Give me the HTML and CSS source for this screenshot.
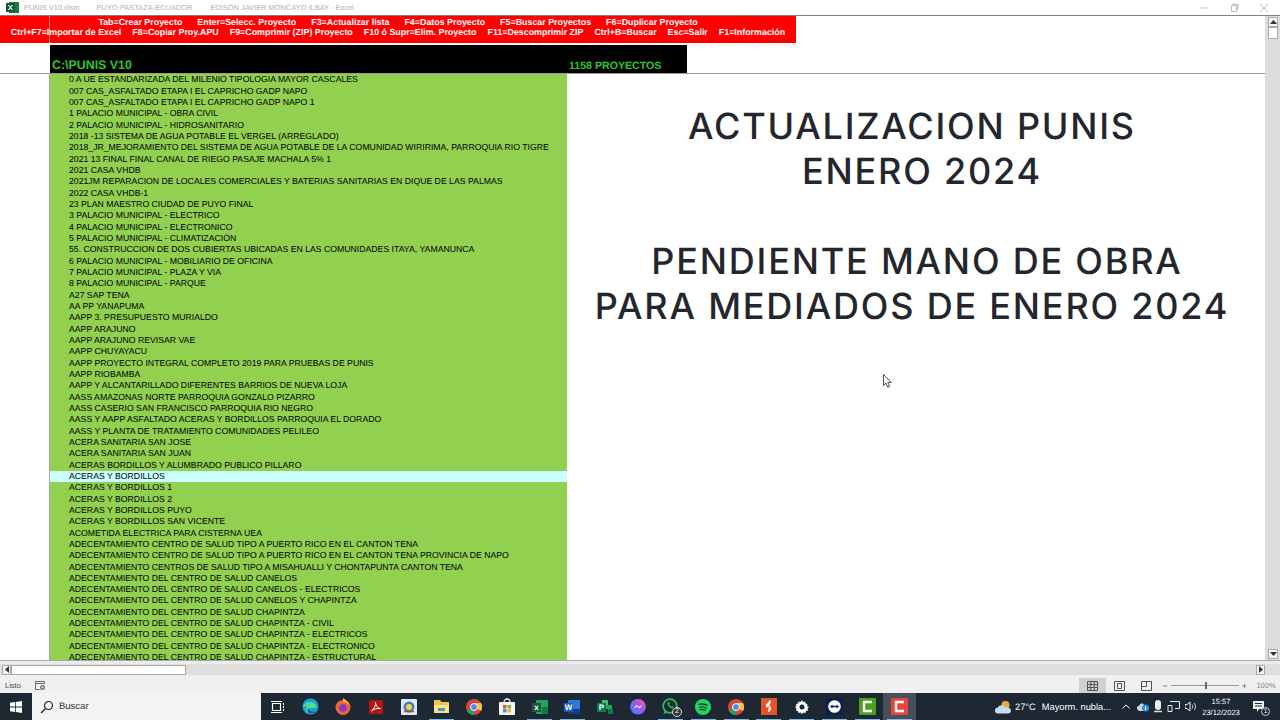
FILE: index.html
```html
<!DOCTYPE html>
<html lang="es">
<head>
  <meta charset="UTF-8">
  <title>PUNIS V10</title>
  <link rel="stylesheet" href="styles.css">
</head>
<body>

  <!-- Excel title bar -->
  <div class="titlebar">
    <svg class="xl-logo" width="13" height="13" viewBox="0 0 13 13">
      <rect x="3" y="1" width="10" height="11" fill="#1f7a45"/>
      <rect x="0" y="2" width="9" height="9" fill="#0f5c30"/>
      <path d="M2.5 4l4 5M6.5 4l-4 5" stroke="#fff" stroke-width="1.2"/>
    </svg>
    <span class="title-file">PUNIS V10.xlsm</span>
    <span class="title-place">PUYO-PASTAZA-ECUADOR</span>
    <span class="title-name">EDISON JAVIER MONCAYO ILBAY - Excel</span>
    <div class="win-btns">
      <svg width="10" height="10" viewBox="0 0 10 10"><path d="M1 5h8" stroke="#c4c4c4"/></svg>
      <svg width="10" height="10" viewBox="0 0 10 10"><path d="M2.500 2.500h5v6h-5zM4 2.500V1h5v5H7.500" fill="none" stroke="#bdbdbd"/></svg>
      <svg width="10" height="10" viewBox="0 0 10 10"><path d="M1 1l8 8M9 1l-8 8" stroke="#bdbdbd"/></svg>
    </div>
  </div>

  <!-- Worksheet -->
  <div class="sheet">
    <div class="sheet-main">
      <div class="keys">
        <div class="keys-line">
          <span>Tab=Crear Proyecto</span>
          <span>Enter=Selecc. Proyecto</span>
          <span>F3=Actualizar lista</span>
          <span>F4=Datos Proyecto</span>
          <span>F5=Buscar Proyectos</span>
          <span>F6=Duplicar Proyecto</span>
        </div>
        <div class="keys-line keys-tight">
          <span>Ctrl+F7=Importar de Excel</span>
          <span>F8=Copiar Proy.APU</span>
          <span>F9=Comprimir (ZIP) Proyecto</span>
          <span>F10 ó Supr=Elim. Proyecto</span>
          <span>F11=Descomprimir ZIP</span>
          <span>Ctrl+B=Buscar</span>
          <span>Esc=Salir</span>
          <span>F1=Información</span>
        </div>
      </div>

      <div class="path-row">
        <div class="path-bar">
          <div class="path-name">C:\PUNIS V10</div>
          <div class="path-count">1158 PROYECTOS</div>
        </div>
      </div>

      <div class="body-row">
        <div class="gutter"></div>
        <ul class="projects">
          <li>0 A UE ESTANDARIZADA DEL MILENIO TIPOLOGIA MAYOR CASCALES</li>
          <li>007 CAS_ASFALTADO ETAPA I EL CAPRICHO GADP NAPO</li>
          <li>007 CAS_ASFALTADO ETAPA I EL CAPRICHO GADP NAPO 1</li>
          <li>1 PALACIO MUNICIPAL - OBRA CIVIL</li>
          <li>2 PALACIO MUNICIPAL - HIDROSANITARIO</li>
          <li>2018 -13 SISTEMA DE AGUA POTABLE EL VERGEL (ARREGLADO)</li>
          <li>2018_JR_MEJORAMIENTO DEL SISTEMA DE AGUA POTABLE DE LA COMUNIDAD WIRIRIMA, PARROQUIA RIO TIGRE</li>
          <li>2021 13 FINAL FINAL CANAL DE RIEGO PASAJE MACHALA 5% 1</li>
          <li>2021 CASA VHDB</li>
          <li>2021JM REPARACION DE LOCALES COMERCIALES Y BATERIAS SANITARIAS EN DIQUE DE LAS PALMAS</li>
          <li>2022 CASA VHDB-1</li>
          <li>23 PLAN MAESTRO CIUDAD DE PUYO FINAL</li>
          <li>3 PALACIO MUNICIPAL - ELECTRICO</li>
          <li>4 PALACIO MUNICIPAL - ELECTRONICO</li>
          <li>5 PALACIO MUNICIPAL - CLIMATIZACIÓN</li>
          <li>55. CONSTRUCCION DE DOS CUBIERTAS UBICADAS EN LAS COMUNIDADES ITAYA, YAMANUNCA</li>
          <li>6 PALACIO MUNICIPAL - MOBILIARIO DE OFICINA</li>
          <li>7 PALACIO MUNICIPAL - PLAZA Y VIA</li>
          <li>8 PALACIO MUNICIPAL - PARQUE</li>
          <li>A27 SAP TENA</li>
          <li>AA PP YANAPUMA</li>
          <li>AAPP 3. PRESUPUESTO MURIALDO</li>
          <li>AAPP ARAJUNO</li>
          <li>AAPP ARAJUNO REVISAR VAE</li>
          <li>AAPP CHUYAYACU</li>
          <li>AAPP PROYECTO INTEGRAL COMPLETO 2019 PARA PRUEBAS DE PUNIS</li>
          <li>AAPP RIOBAMBA</li>
          <li>AAPP Y ALCANTARILLADO DIFERENTES BARRIOS DE NUEVA LOJA</li>
          <li>AASS AMAZONAS NORTE PARROQUIA GONZALO PIZARRO</li>
          <li>AASS CASERIO SAN FRANCISCO PARROQUIA RIO NEGRO</li>
          <li>AASS Y AAPP ASFALTADO ACERAS Y BORDILLOS PARROQUIA EL DORADO</li>
          <li>AASS Y PLANTA DE TRATAMIENTO COMUNIDADES PELILEO</li>
          <li>ACERA SANITARIA SAN JOSE</li>
          <li>ACERA SANITARIA SAN JUAN</li>
          <li>ACERAS BORDILLOS Y ALUMBRADO PUBLICO PILLARO</li>
          <li class="selected">ACERAS Y BORDILLOS</li>
          <li>ACERAS Y BORDILLOS 1</li>
          <li>ACERAS Y BORDILLOS 2</li>
          <li>ACERAS Y BORDILLOS PUYO</li>
          <li>ACERAS Y BORDILLOS SAN VICENTE</li>
          <li>ACOMETIDA ELECTRICA PARA CISTERNA UEA</li>
          <li>ADECENTAMIENTO CENTRO DE SALUD TIPO A PUERTO RICO EN EL CANTON TENA</li>
          <li>ADECENTAMIENTO CENTRO DE SALUD TIPO A PUERTO RICO EN EL CANTON TENA PROVINCIA DE NAPO</li>
          <li>ADECENTAMIENTO CENTROS DE SALUD TIPO A MISAHUALLI Y CHONTAPUNTA CANTON TENA</li>
          <li>ADECENTAMIENTO DEL CENTRO DE SALUD CANELOS</li>
          <li>ADECENTAMIENTO DEL CENTRO DE SALUD CANELOS - ELECTRICOS</li>
          <li>ADECENTAMIENTO DEL CENTRO DE SALUD CANELOS Y CHAPINTZA</li>
          <li>ADECENTAMIENTO DEL CENTRO DE SALUD CHAPINTZA</li>
          <li>ADECENTAMIENTO DEL CENTRO DE SALUD CHAPINTZA - CIVIL</li>
          <li>ADECENTAMIENTO DEL CENTRO DE SALUD CHAPINTZA - ELECTRICOS</li>
          <li>ADECENTAMIENTO DEL CENTRO DE SALUD CHAPINTZA - ELECTRONICO</li>
          <li>ADECENTAMIENTO DEL CENTRO DE SALUD CHAPINTZA - ESTRUCTURAL</li>
        </ul>
        <div class="note">
          <div class="note-line">ACTUALIZACION PUNIS</div>
          <div class="note-line shift-a">ENERO 2024</div>
          <div class="note-line blank">&nbsp;</div>
          <div class="note-line shift-b">PENDIENTE MANO DE OBRA</div>
          <div class="note-line">PARA MEDIADOS DE ENERO 2024</div>
        </div>
      </div>
    </div>

    <!-- Vertical scrollbar -->
    <div class="vscroll">
      <div class="vbtn"><svg width="7" height="4" viewBox="0 0 7 4"><path d="M3.500 0L7 4H0z" fill="#333"/></svg></div>
      <div class="vthumb"></div>
      <div class="vtrack"></div>
      <div class="vbtn"><svg width="7" height="4" viewBox="0 0 7 4"><path d="M0 0h7L3.500 4z" fill="#333"/></svg></div>
    </div>
  </div>

  <!-- Horizontal scrollbar -->
  <div class="hscroll">
    <div class="hbtn"><svg width="4" height="7" viewBox="0 0 4 7"><path d="M4 0v7L0 3.500z" fill="#333"/></svg></div>
    <div class="hthumb"></div>
    <div class="htrack"></div>
    <div class="hbtn"><svg width="4" height="7" viewBox="0 0 4 7"><path d="M0 0v7l4-3.500z" fill="#333"/></svg></div>
  </div>

  <!-- Excel status bar -->
  <div class="statusbar">
    <span class="status-text">Listo</span>
    <svg class="macro-icon" width="11" height="10" viewBox="0 0 11 10">
      <path d="M.5.500h9v2h-9zM.5 2.500v6h4" fill="none" stroke="#666"/>
      <circle cx="7.500" cy="6.500" r="2.500" fill="#777"/>
      <circle cx="7.500" cy="6.500" r="1" fill="#eee"/>
    </svg>
    <div class="views">
      <div class="view active">
        <svg width="11" height="10" viewBox="0 0 11 10"><path d="M.5.500h10v9H.5zM3.800.500v9M7.200.500v9M.5 3.500h10M.5 6.500h10" fill="none" stroke="#555"/></svg>
      </div>
      <div class="view">
        <svg width="11" height="10" viewBox="0 0 11 10"><path d="M.5.500h10v9H.5z" fill="none" stroke="#555"/><path d="M3.500 2.500h4v5h-4z" fill="none" stroke="#555"/></svg>
      </div>
      <div class="view">
        <svg width="11" height="10" viewBox="0 0 11 10"><path d="M.5.500h10v9H.5zM5.500.500v5H.5" fill="none" stroke="#555"/></svg>
      </div>
    </div>
    <div class="zoombar">
      <span class="zoom-sign">−</span>
      <div class="zoom-track"><div class="zoom-knob"></div></div>
      <span class="zoom-sign">+</span>
    </div>
    <span class="zoom-pct">100%</span>
  </div>

  <!-- Windows taskbar -->
  <div class="taskbar">
    <div class="start">
      <svg width="12" height="12" viewBox="0 0 12 12"><path d="M0 1.700L5 1v4.600H0zM5.800.900L12 0v5.600H5.800zM0 6.400h5V11l-5-.7zM5.800 6.400H12V12l-6.200-.9z" fill="#fff"/></svg>
    </div>
    <div class="searchbox">
      <svg width="14" height="14" viewBox="0 0 14 14"><circle cx="8.500" cy="5.500" r="4" fill="none" stroke="#222" stroke-width="1.200"/><path d="M5.500 8.500L1 13" stroke="#222" stroke-width="1.300"/></svg>
      <span>Buscar</span>
    </div>
    <div class="apps">
      <div class="app">
        <svg width="14" height="12" viewBox="0 0 14 12"><path d="M1.500 2.500h8v7h-8z" fill="none" stroke="#fff" stroke-width="1.200"/><path d="M0 .5h11M0 11.500h11M12.500 2v2M12.500 5v2M12.500 8v2" stroke="#fff"/></svg>
      </div>
      <div class="app">
        <svg width="17" height="17" viewBox="0 0 17 17"><circle cx="8.500" cy="8.500" r="8" fill="#1b9de2"/><path d="M1 9c1-5 10-7 13-2 1 2 0 3-2 3H8c0 3 4 4 7 3-2 3-6 4-9 2-3-2-2-6 0-7-2 0-4 1-5 1z" fill="#4fdc8b"/><path d="M7 10c0 3 4 4 8 3-2 3-6 3-8 2-2-1-2-4 0-5z" fill="#0d5fb0"/></svg>
      </div>
      <div class="app">
        <svg width="16" height="17" viewBox="0 0 16 17"><circle cx="8" cy="9.500" r="7.500" fill="#f2603a"/><path d="M8 0c3 2 6 4 7 8-2-3-4-4-7-4z" fill="#ffb52e"/><circle cx="8" cy="10" r="3.800" fill="#7a3ec8"/></svg>
      </div>
      <div class="app">
        <svg width="14" height="14" viewBox="0 0 14 14"><rect width="14" height="14" rx="1.500" fill="#b3160f"/><path d="M2.500 11C5 9 7 5 6.500 2.500 7 6 9 8.500 11.500 8.500 8 8 5 9 2.500 11z" fill="none" stroke="#fff" stroke-width="1"/></svg>
      </div>
      <div class="app">
        <svg width="16" height="16" viewBox="0 0 16 16"><rect width="16" height="16" rx="1" fill="#dfe8f2"/><circle cx="8" cy="8" r="5.500" fill="#3f7fc4"/><circle cx="8" cy="8" r="3" fill="#f3d34a"/><path d="M3 12.500h10" stroke="#b44" stroke-width="1.500"/></svg>
      </div>
      <div class="app running">
        <svg width="15" height="13" viewBox="0 0 15 13"><path d="M0 0h6l1.500 2H15v11H0z" fill="#f1c552"/><rect y="5" width="15" height="8" fill="#ffdf85"/><rect x="4" y="8" width="7" height="3" fill="#3d9ad6"/></svg>
      </div>
      <div class="app">
        <svg width="16" height="16" viewBox="0 0 16 16"><circle cx="8" cy="8" r="8" fill="#dd4437"/><path d="M8 8L1 12a8 8 0 0 0 7 4z" fill="#1da462"/><path d="M8 8l7 4a8 8 0 0 0 0-8H8z" fill="#fbc02d"/><circle cx="8" cy="8" r="3.500" fill="#4a8af4" stroke="#fff"/></svg>
      </div>
      <div class="app">
        <svg width="16" height="17" viewBox="0 0 16 17"><rect y="4" width="16" height="13" rx="1" fill="#f5f5f5"/><path d="M5 4a3 3 0 0 1 6 0" fill="none" stroke="#eee" stroke-width="1.300"/><rect x="4" y="7" width="3.500" height="3.500" fill="#e8562c"/><rect x="8.500" y="7" width="3.500" height="3.500" fill="#7db93a"/><rect x="4" y="11" width="3.500" height="3.500" fill="#2f9ee5"/><rect x="8.500" y="11" width="3.500" height="3.500" fill="#f7b92f"/></svg>
      </div>
      <div class="app running">
        <svg width="16" height="14" viewBox="0 0 16 14"><rect x="4" width="12" height="14" rx="1" fill="#21a366"/><rect x="10" y="7" width="6" height="7" fill="#107c41"/><rect y="3" width="9" height="9" fill="#185c37"/><text x="4.500" y="10.200" class="badge-letter">x</text></svg>
      </div>
      <div class="app running">
        <svg width="16" height="14" viewBox="0 0 16 14"><rect x="4" width="12" height="14" rx="1" fill="#2b7cd3"/><rect x="4" y="9" width="12" height="5" fill="#103f91"/><rect y="3" width="9" height="9" fill="#185abd"/><text x="4.500" y="10.200" class="badge-letter">W</text></svg>
      </div>
      <div class="app">
        <svg width="16" height="14" viewBox="0 0 16 14"><rect x="5" width="6" height="5" fill="#33c481"/><rect x="8" y="5" width="7" height="4" fill="#21a366"/><rect x="11" y="9" width="5" height="5" fill="#107c41"/><rect y="3" width="9" height="9" fill="#0e7a4e"/><text x="4.500" y="10.200" class="badge-letter">P</text></svg>
      </div>
      <div class="app">
        <svg width="16" height="16" viewBox="0 0 16 16"><defs><linearGradient id="msg" x1="0" y1="1" x2="1" y2="0"><stop offset="0" stop-color="#2f8cff"/><stop offset=".6" stop-color="#a552f0"/><stop offset="1" stop-color="#ff6f7d"/></linearGradient></defs><circle cx="8" cy="7.800" r="7.800" fill="url(#msg)"/><path d="M3.500 10l3-4 2.500 2 3.500-2.500-3 4-2.500-2z" fill="#fff"/></svg>
      </div>
      <div class="app running">
        <svg width="18" height="18" viewBox="0 0 18 18"><circle cx="8" cy="8" r="6.800" fill="none" stroke="#25c05f" stroke-width="1.700"/><path d="M1.500 16l1.200-4 2.800 2.600z" fill="#25c05f"/><path d="M5.500 5c0 3 2.500 5.500 5.500 5.500l.7-1.700-1.800-.8-.7.700C8.500 8.300 7.500 7.300 7.200 6.300l.7-.7L7 4z" fill="#25c05f"/></svg>
        <span class="wa-count">2</span>
      </div>
      <div class="app running">
        <svg width="16" height="16" viewBox="0 0 16 16"><circle cx="8" cy="8" r="8" fill="#1ed760"/><path d="M3.500 5.500c3-1 6.500-.6 9 1M4 8.200c2.500-.8 5.500-.4 7.700 1M4.500 10.800c2-.6 4.300-.3 6.200.8" fill="none" stroke="#123" stroke-width="1.200"/></svg>
      </div>
      <div class="app running">
        <svg width="16" height="16" viewBox="0 0 16 16"><circle cx="8" cy="8" r="8" fill="#dd4437"/><path d="M8 8L1 12a8 8 0 0 0 7 4z" fill="#1da462"/><path d="M8 8l7 4a8 8 0 0 0 0-8H8z" fill="#fbc02d"/><circle cx="8" cy="8" r="3.500" fill="#4a8af4" stroke="#fff"/></svg>
      </div>
      <div class="app running">
        <svg width="16" height="17" viewBox="0 0 16 17"><rect width="16" height="17" fill="#e2542a"/><path d="M9 2c-1 2-4 3-4 6 0 1 1 2 2 1l1-1-1 6c2 0 3-2 3-4 0-1-1-2-2-1l1-3c1-1 1-3 0-4z" fill="#fff"/></svg>
      </div>
      <div class="app running">
        <svg width="14" height="14" viewBox="0 0 14 14"><path d="M7 0l1 2 2-.5.500 2 2 .5-.5 2 2 1-1.500 1.500.5 2-2 .5-.5 2-2-.5-1.500 1.500-1.500-1.500-2 .5-.5-2-2-.5.500-2L0 7l1.500-1-.5-2 2-.5.500-2 2 .5z" fill="#fff"/><circle cx="7" cy="7" r="2.500" fill="#1d2833"/></svg>
      </div>
      <div class="app running">
        <svg width="17" height="17" viewBox="0 0 17 17"><rect width="17" height="17" rx="2" fill="#0c1e5a"/><circle cx="8.500" cy="8.500" r="6.300" fill="#fff"/><path d="M4 8.500l2.500-2v1.300h4V6.500l2.500 2-2.500 2V9.200h-4v1.300z" fill="#0c1e5a"/></svg>
      </div>
      <div class="app running">
        <svg width="17" height="17" viewBox="0 0 17 17"><rect width="17" height="17" rx="1" fill="#4aa01c"/><path d="M13 4H5v9h8" fill="none" stroke="#fff" stroke-width="2.400"/></svg>
      </div>
      <div class="app running current">
        <svg width="17" height="17" viewBox="0 0 17 17"><rect width="17" height="17" rx="1" fill="#e8443a"/><path d="M13 4H5v9h8" fill="none" stroke="#fff" stroke-width="2.400"/></svg>
      </div>
    </div>

    <div class="tray">
      <svg class="tray-cloud" width="17" height="14" viewBox="0 0 17 14"><circle cx="10.500" cy="5" r="4" fill="#f2a93b"/><path d="M3 13.500a3 3 0 0 1 0-6c1-3 6-3 7 0 3-1 6 1 6 3s-1 3-3 3z" fill="#c6dcf2"/></svg>
      <span class="tray-temp">27°C</span>
      <span class="tray-weather">Mayorm. nubla...</span>
      <svg class="tray-caret" width="8" height="5" viewBox="0 0 8 5"><path d="M.5 4.500L4 1l3.500 3.500" fill="none" stroke="#fff"/></svg>
      <svg class="tray-icon" width="12" height="10" viewBox="0 0 12 10"><path d="M0 7a2 2 0 0 1 2-3c1-3 4-3 5-1v6H2z" fill="#c8d4de"/><circle cx="8.500" cy="6" r="3.500" fill="#2b8fe0"/><path d="M8.500 4.500v3.500" stroke="#fff"/></svg>
      <svg class="tray-icon" width="8" height="13" viewBox="0 0 8 13"><rect x="1" width="6" height="10" rx="3" fill="#eee"/><path d="M0 11.500h8" stroke="#ddd" stroke-width="1.500"/></svg>
      <svg class="tray-icon" width="13" height="11" viewBox="0 0 13 11"><path d="M3 .5h9.500v7H8M5 10.500H1v-6h4zM3 8.500h0" fill="none" stroke="#eee"/></svg>
      <svg class="tray-icon" width="12" height="11" viewBox="0 0 12 11"><path d="M0 3.500h2L5 1v9L2 7.500H0z" fill="none" stroke="#eee"/><path d="M7 3.500c1 1 1 3 0 4M9 2c2 2 2 5 0 7" fill="none" stroke="#eee"/></svg>
      <div class="clock">
        <div>15:57</div>
        <div>23/12/2023</div>
      </div>
      <div class="notif">
        <svg width="12" height="11" viewBox="0 0 12 11"><path d="M0 0h11v8H6l-2 3V8H0z" fill="#eee"/><path d="M2 2.500h7M2 5h7" stroke="#1d2833"/></svg>
        <span class="notif-count">1</span>
      </div>
    </div>
  </div>

  <!-- Mouse pointer -->
  <svg class="pointer" width="9" height="14" viewBox="0 0 9 14">
    <path d="M.5.500v11l2.500-2.400 1.800 4.200 1.800-.8L4.800 8.400h3.500z" fill="#fff" stroke="#222" stroke-width=".8"/>
  </svg>

</body>
</html>
```

FILE: styles.css
```css
/* Basic page styles */
html, body {
  margin: 0;
  padding: 0;
  height: 100%;
  overflow: hidden;
  background-color: #fff;
  font-family: "Liberation Sans", Arial, sans-serif;
  text-rendering: geometricPrecision;
}

body {
  display: flex;
  flex-direction: column;
  height: 720px;
}

/* Title bar */
.titlebar {
  display: flex;
  align-items: center;
  height: 15px;
  flex: none;
  color: #b0b0b0;
  font-size: 7.450px;
  background-color: #fff;
  border-bottom: 1px solid #808080;
  box-sizing: content-box;
}

.xl-logo {
  margin-left: 6px;
}

.title-file {
  margin-left: 5px;
}

.title-place {
  margin-left: 17px;
}

.title-name {
  margin-left: 18px;
}

.win-btns {
  display: flex;
  gap: 20px;
  margin-left: auto;
  margin-right: 11px;
}

/* Worksheet */
.sheet {
  display: flex;
  flex: 1;
  min-height: 0;
  border-bottom: 1px solid #a8a8a8;
}

.sheet-main {
  flex: 1;
  min-width: 0;
  display: flex;
  flex-direction: column;
  position: relative;
}

.keys {
  width: 796px;
  height: 27px;
  flex: none;
  background-color: #ff0000;
  color: #fff;
  font-size: 8.900px;
  font-weight: bold;
  line-height: 10px;
  padding-top: 1px;
  box-sizing: border-box;
  background-image: linear-gradient(#ff8080, #ff8080);
  background-size: 1px 100%;
  background-position: 49px 0;
  background-repeat: no-repeat;
}

.keys-line {
  display: flex;
  justify-content: center;
  gap: 15px;
  white-space: nowrap;
}

.keys-tight {
  gap: 11px;
}

.path-row {
  height: 31px;
  flex: none;
  padding-top: 2px;
  box-sizing: border-box;
  padding-left: 50px;
  border-bottom: 1px solid #9a9a9a;
}

.path-bar {
  display: flex;
  width: 637px;
  height: 28px;
  background-color: #000;
  color: #2fc42f;
  font-weight: bold;
  align-items: flex-end;
  padding-bottom: 1px;
  box-sizing: border-box;
}

.path-name {
  width: 517px;
  padding-left: 2px;
  box-sizing: border-box;
  font-size: 12.400px;
}

.path-count {
  padding-left: 2px;
  font-size: 10.600px;
}

.body-row {
  display: flex;
  flex: 1;
  min-height: 0;
}

.gutter {
  width: 49px;
  flex: none;
  border-right: 1px solid #a8a8a8;
}

.projects {
  list-style: none;
  width: 517px;
  flex: none;
  margin: 0;
  padding: .400px 0 0;
  box-sizing: border-box;
  overflow: hidden;
  background-color: #92d050;
  color: #000;
  font-size: 8.700px;
}

.projects li {
  height: 11.340px;
  line-height: 11.340px;
  padding-left: 19px;
  white-space: nowrap;
  overflow: hidden;
}

.projects .selected {
  background-color: #ccffff;
}

/* Note beside the list */
.note {
  flex: 1;
  padding-top: 30px;
  color: #23262d;
  font-family: Inter, sans-serif;
  font-weight: 500;
  font-size: 36px;
  line-height: 45px;
  letter-spacing: 1.800px;
}

.note-line {
  text-align: center;
  white-space: nowrap;
  padding-right: 8px;
}

.shift-a {
  padding-right: 0;
  padding-left: 12px;
}

.shift-b {
  padding-right: 0;
  padding-left: 2px;
}

/* Scrollbars */
.vscroll {
  width: 15px;
  flex: none;
  display: flex;
  flex-direction: column;
  align-items: center;
  background-color: #dcdcdc;
  padding: 1px 0 1px 1px;
  box-sizing: border-box;
}

.vbtn {
  width: 10px;
  height: 10px;
  flex: none;
  display: flex;
  align-items: center;
  justify-content: center;
  background-color: #f4f4f4;
  border: 1px solid #aaa;
  box-sizing: border-box;
}

.vthumb {
  width: 10px;
  height: 12px;
  flex: none;
  background-color: #fff;
  border: 1px solid #aaa;
  box-sizing: border-box;
}

.vtrack {
  flex: 1;
}

.hscroll {
  height: 16px;
  flex: none;
  display: flex;
  align-items: center;
  background-color: #dedede;
  border-top: 3px solid #ececec;
  border-bottom: 2px solid #f0f0f0;
  box-sizing: border-box;
  padding: 0 15px 0 2px;
}

.hbtn {
  width: 9px;
  height: 10px;
  flex: none;
  display: flex;
  align-items: center;
  justify-content: center;
  background-color: #f4f4f4;
  border: 1px solid #aaa;
  box-sizing: border-box;
}

.hthumb {
  width: 175px;
  height: 10px;
  flex: none;
  background-color: #fff;
  border: 1px solid #aaa;
  box-sizing: border-box;
}

.htrack {
  flex: 1;
}

/* Status bar */
.statusbar {
  display: flex;
  align-items: center;
  height: 16px;
  flex: none;
  padding-top: 1px;
  box-sizing: border-box;
  background-color: #f0f0f0;
  color: #444;
  font-size: 7.500px;
}

.status-text {
  margin-left: 5px;
}

.macro-icon {
  margin-left: 14px;
}

.views {
  display: flex;
  margin-left: auto;
}

.view {
  width: 27px;
  height: 15px;
  display: flex;
  align-items: center;
  justify-content: center;
}

.view.active {
  background-color: #d0d0d0;
}

.zoombar {
  display: flex;
  align-items: center;
  gap: 3px;
  margin-left: 2px;
  margin-right: 5px;
}

.zoom-sign {
  font-size: 9px;
  color: #555;
}

.zoom-track {
  position: relative;
  width: 68px;
  height: 1px;
  background-color: #999;
}

.zoom-knob {
  position: absolute;
  left: 34px;
  top: -3px;
  width: 2px;
  height: 7px;
  background-color: #666;
}

.zoom-pct {
  width: 28px;
  text-align: center;
  color: #888;
}

/* Taskbar */
.taskbar {
  display: flex;
  align-items: center;
  height: 27px;
  flex: none;
  background-color: #1d2833;
  color: #fff;
}

.start {
  width: 32px;
  display: flex;
  justify-content: center;
}

.searchbox {
  display: flex;
  align-items: center;
  width: 229px;
  height: 27px;
  background-color: #f3f3f3;
  color: #333;
  font-size: 9.500px;
  box-sizing: border-box;
  padding-left: 8px;
  gap: 5px;
}

.apps {
  display: flex;
  height: 27px;
}

.app {
  position: relative;
  width: 33px;
  height: 27px;
  margin-right: -.250px;
  display: flex;
  align-items: center;
  justify-content: center;
}

.app.running::after {
  content: "";
  position: absolute;
  left: 4px;
  right: 4px;
  bottom: 0;
  height: 1px;
  background-color: #7fb7e0;
}

.app.current {
  background-color: #46505a;
}

.badge-letter {
  fill: #fff;
  font-size: 8px;
  font-weight: bold;
  text-anchor: middle;
  font-family: "Liberation Sans", Arial, sans-serif;
}

.wa-count {
  position: absolute;
  right: 5px;
  bottom: 3px;
  width: 10px;
  height: 10px;
  border-radius: 50%;
  background-color: #333;
  border: 1px solid #ddd;
  box-sizing: border-box;
  font-size: 7px;
  line-height: 8px;
  text-align: center;
}

.tray {
  display: flex;
  align-items: center;
  margin-left: auto;
  font-size: 9.300px;
  height: 27px;
}

.tray-temp {
  margin-left: 3px;
}

.tray-weather {
  margin-left: 6px;
}

.tray-caret {
  margin-left: 11px;
  margin-right: 2px;
}

.tray-icon {
  margin-left: 5px;
}

.clock {
  margin-left: 3px;
  width: 42px;
  text-align: center;
  font-size: 7.500px;
  line-height: 11px;
}

.notif {
  position: relative;
  margin-left: 11px;
  margin-right: 15px;
  display: flex;
}

.notif-count {
  position: absolute;
  right: -5px;
  bottom: -4px;
  width: 9px;
  height: 9px;
  border-radius: 50%;
  border: 1px solid #ccc;
  background-color: #1d2833;
  box-sizing: border-box;
  font-size: 6.500px;
  line-height: 7px;
  text-align: center;
}

/* Pointer lies over the sheet */
.pointer {
  position: absolute;
  left: 883px;
  top: 374px;
}
```
